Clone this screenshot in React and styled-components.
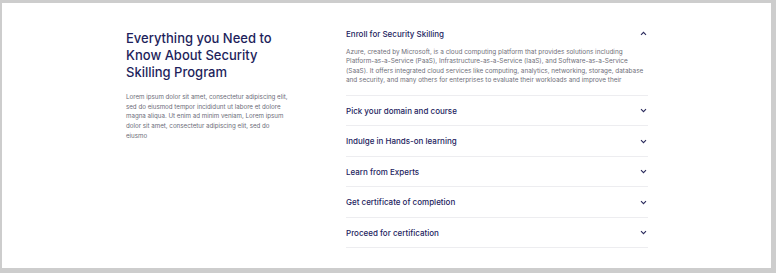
import React, { useState } from "react"
import styled, { createGlobalStyle } from "styled-components"

const GlobalStyle = createGlobalStyle`
  body {
    margin: 0;
    background: #cdcdcd;
    font-family: Inter, "Noto Sans", sans-serif;
  }
`

const items = [
  {
    title: "Enroll for Security Skilling",
    body:
      "Azure, created by Microsoft, is a cloud computing platform that provides solutions including Platform-as-a-Service (PaaS), Infrastructure-as-a-Service (IaaS), and Software-as-a-Service (SaaS). It offers integrated cloud services like computing, analytics, networking, storage, database and security, and many others for enterprises to evaluate their workloads and improve their",
  },
  { title: "Pick your domain and course" },
  { title: "Indulge in Hands-on learning" },
  { title: "Learn from Experts" },
  { title: "Get certificate of completion" },
  { title: "Proceed for certification" },
]

const Chevron = ({ up }) => (
  <svg width="7" height="5" viewBox="0 0 7 5" fill="none">
    <path
      d={up ? "M1 3.8L3.5 1.3L6 3.8" : "M1 1.2L3.5 3.7L6 1.2"}
      stroke="#2a2a5c"
      strokeWidth="1.1"
    />
  </svg>
)

const App = () => {
  const [open, setOpen] = useState(0)
  return (
    <Frame>
      <GlobalStyle />
      <Intro>
        <Heading>Everything you Need to Know About Security Skilling Program</Heading>
        <Lead>
          Lorem ipsum dolor sit amet, consectetur adipiscing elit, sed do eiusmod tempor
          incididunt ut labore et dolore magna aliqua. Ut enim ad minim veniam, Lorem ipsum
          dolor sit amet, consectetur adipiscing elit, sed do eiusmo
        </Lead>
      </Intro>
      <Accordion>
        {items.map((item, i) => (
          <Item key={item.title}>
            <Header onClick={() => setOpen(open === i ? -1 : i)}>
              <Title>{item.title}</Title>
              <Chevron up={open === i} />
            </Header>
            {open === i && item.body && <Body>{item.body}</Body>}
          </Item>
        ))}
      </Accordion>
    </Frame>
  )
}

const Frame = styled.div`
  display: flex;
  margin: 3px 5px 5px 2px;
  height: 265px;
  background: #ffffff;
  padding: 0 0 0 124px;
  box-sizing: border-box;
`

const Intro = styled.div`
  width: 170px;
  padding-top: 27px;
  margin-right: 50px;
`

const Heading = styled.h2`
  margin: 0;
  width: 160px;
  font-size: 13px;
  line-height: 17px;
  font-weight: 500;
  color: #1e1f5c;
`

const Lead = styled.p`
  margin: 11px 0 0;
  width: 165.5px;
  font-size: 6.2px;
  line-height: 9.7px;
  color: #6b6b78;
`

const Accordion = styled.div`
  width: 302px;
  padding-top: 16px;
`

const Item = styled.div`
  border-bottom: 1px solid #ededf0;
`

const Header = styled.div`
  display: flex;
  align-items: center;
  justify-content: space-between;
  height: 29.5px;
  padding-right: 1px;
  cursor: pointer;
`

const Title = styled.span`
  font-size: 8px;
  font-weight: 500;
  color: #23235e;
`

const Body = styled.p`
  margin: -1px 0 9px;
  font-size: 6.4px;
  line-height: 9.6px;
  color: #6f6f7a;
`

export default App
